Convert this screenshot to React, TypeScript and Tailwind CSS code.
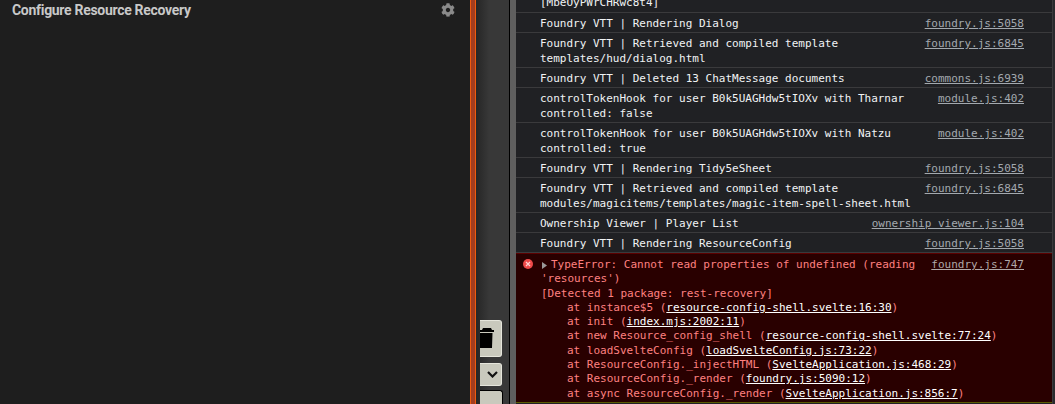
import { FaCog } from "react-icons/fa";

const mono = "font-['DejaVu_Sans_Mono',monospace]";

type Row = { lines: string[]; src: string };

const rows: Row[] = [
  { lines: ["Foundry VTT | Rendering Dialog"], src: "foundry.js:5058" },
  { lines: ["Foundry VTT | Retrieved and compiled template", "templates/hud/dialog.html"], src: "foundry.js:6845" },
  { lines: ["Foundry VTT | Deleted 13 ChatMessage documents"], src: "commons.js:6939" },
  { lines: ["controlTokenHook for user B0k5UAGHdw5tIOXv with Tharnar", "controlled: false"], src: "module.js:402" },
  { lines: ["controlTokenHook for user B0k5UAGHdw5tIOXv with Natzu", "controlled: true"], src: "module.js:402" },
  { lines: ["Foundry VTT | Rendering Tidy5eSheet"], src: "foundry.js:5058" },
  { lines: ["Foundry VTT | Retrieved and compiled template", "modules/magicitems/templates/magic-item-spell-sheet.html"], src: "foundry.js:6845" },
  { lines: ["Ownership Viewer | Player List"], src: "ownership viewer.js:104" },
  { lines: ["Foundry VTT | Rendering ResourceConfig"], src: "foundry.js:5058" },
];

const stack: [string, string, string][] = [
  ["at instance$5 (", "resource-config-shell.svelte:16:30", ")"],
  ["at init (", "index.mjs:2002:11", ")"],
  ["at new Resource_config_shell (", "resource-config-shell.svelte:77:24", ")"],
  ["at loadSvelteConfig (", "loadSvelteConfig.js:73:22", ")"],
  ["at ResourceConfig._injectHTML (", "SvelteApplication.js:468:29", ")"],
  ["at ResourceConfig._render (", "foundry.js:5090:12", ")"],
  ["at async ResourceConfig._render (", "SvelteApplication.js:856:7", ")"],
];

function LogRow({ row }: { row: Row }) {
  return (
    <div className="flex justify-between border-b border-[#3a3a3c] pl-[24px] pr-[28px] pt-[3px] pb-[1px] leading-[15px] text-[#f1f3f4]">
      <div>
        {row.lines.map((l) => (
          <div key={l} className="whitespace-pre">{l}</div>
        ))}
      </div>
      <a className="text-[#a3a9af] underline">{row.src}</a>
    </div>
  );
}

export default function App() {
  return (
    <div className="flex h-[404px] w-[1055px] overflow-hidden bg-[#292a2d]">
      <div className="flex h-full w-[470px] shrink-0 justify-between bg-[#1e1e1e] pl-[12px] pr-[15px] pt-[2px]">
        <span className="font-['Roboto',sans-serif] text-[14px] leading-[17px] font-bold tracking-[-0.3px] text-[#c8c8c8]">
          Configure Resource Recovery
        </span>
        <FaCog className="mt-[1px] text-[14px] text-[#8a8a8a]" />
      </div>
      <div className="h-full w-[6px] shrink-0 border-x border-[#f05a0e] bg-[#a33d1f]" />
      <div className="flex h-full w-[33px] shrink-0 flex-col bg-linear-to-r from-[#262626] to-[#383838] to-40% pl-[4px] pt-[320px]">
        <div className="flex h-[37px] w-[22px] items-center overflow-hidden rounded-r-[3px] border-y border-r border-[#e6e6dc] bg-[#c9c9bd]">
          <svg className="shrink-0" width="14" height="20" viewBox="0 0 14 20" fill="#000">
            <path d="M3 0h8l1 2h2v2H0V2h2zM0 5h12.5L12 20H0z" />
          </svg>
        </div>
        <div className="mt-[6px] flex h-[24px] w-[22px] items-center justify-center rounded-r-[3px] border-y border-r border-[#e6e6dc] bg-[#c9c9bd] pl-[4px]">
          <svg width="11" height="7" viewBox="0 0 11 7" fill="none" stroke="#111" strokeWidth="2.2">
            <path d="M1 1l4.5 4.5L10 1" />
          </svg>
        </div>
        <div className="mt-[4px] h-[14px] w-[23px] rounded-tr-[3px] border-t border-r border-black bg-[#c9c9bd]" />
      </div>
      <div className="h-full w-[7px] shrink-0 border-l border-black bg-[#5f5f5f]" />
      <div className={`h-full w-[537px] shrink-0 border-r border-[#3a3a3c] bg-[#202124] text-[11px] ${mono}`}>
        <div className="flex h-[13px] items-end overflow-hidden border-b border-[#3a3a3c] pb-[2px] pl-[24px] leading-[15px] text-[#f1f3f4]">
          <span className="whitespace-pre">[MbeOyPWrCHRwc8t4]</span>
        </div>
        {rows.map((r, i) => (
          <LogRow key={i} row={r} />
        ))}
        <div className="flex h-[150px] border-y border-t-[#5c0000] border-b-[#5a5a00] bg-[#290000] leading-[14.3px] text-[#ff8080]">
          <svg className="ml-[7px] mt-[5px] shrink-0" width="10" height="10" viewBox="0 0 10 10">
            <circle cx="5" cy="5" r="5" fill="#ef4a4a" />
            <path d="M3 3l4 4M7 3l-4 4" stroke="#ffd0d0" strokeWidth="1.3" />
          </svg>
          <div className="ml-[8px] min-w-0 flex-1 pr-[28px] pt-[4px]">
            <div className="flex justify-between">
              <span className="flex items-center whitespace-pre">
                <svg className="mr-[4px] ml-[1px]" width="5" height="7" viewBox="0 0 5 7" fill="#9a9a9a"><path d="M0 0l5 3.5L0 7z" /></svg>
                TypeError: Cannot read properties of undefined (reading
              </span>
              <a className="text-[#b0a8a8] underline">foundry.js:747</a>
            </div>
            <div className="whitespace-pre">'resources')</div>
            <div className="whitespace-pre">[Detected 1 package: rest-recovery]</div>
            {stack.map(([a, link, b]) => (
              <div key={link + a} className="whitespace-pre pl-[26px]">
                {a}<a className="text-white underline">{link}</a>{b}
              </div>
            ))}
          </div>
        </div>
      </div>
    </div>
  );
}
